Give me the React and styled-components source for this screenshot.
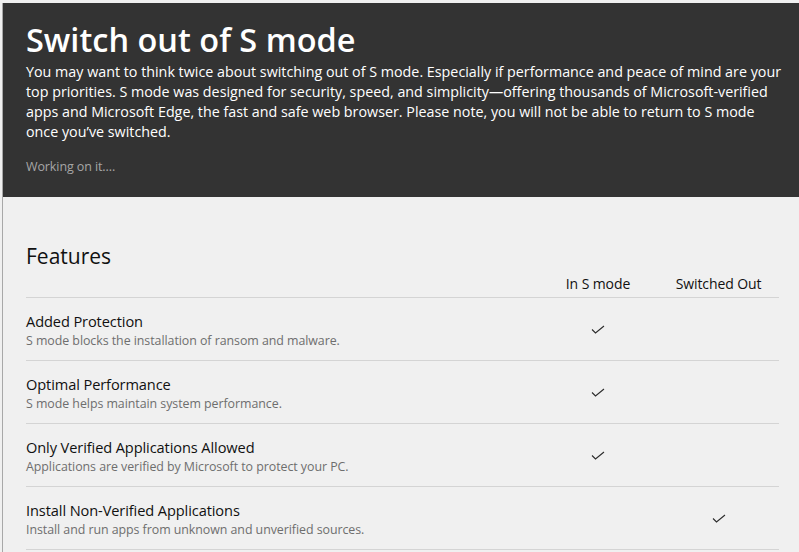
import React from "react";
import styled, { createGlobalStyle } from "styled-components";

const Global = createGlobalStyle`
  html, body { margin: 0; padding: 0; background: #f0f0f0; }
  body { font-family: "Open Sans", "Noto Sans", sans-serif; }
  * { box-sizing: border-box; }
`;

const Frame = styled.div`
  width: 799px;
  height: 552px;
  overflow: hidden;
  background: #f0f0f0;
  padding-top: 3px;
  padding-left: 2px;
`;

const Window = styled.div`
  height: 100%;
  border-left: 1px solid #a8a8a8;
  background: #f0f0f0;
  display: flex;
  flex-direction: column;
`;

const Hero = styled.header`
  background: #333333;
  color: #ffffff;
  height: 194px;
  padding: 15px 16px 0 23px;
  flex-shrink: 0;
`;

const Title = styled.h1`
  margin: 0;
  font-size: 32.5px;
  font-weight: 600;
  line-height: 44px;
  letter-spacing: 0;
`;

const Lead = styled.p`
  margin: 0;
  font-size: 14.3px;
  line-height: 20px;
  color: #ffffff;
`;

const Status = styled.div`
  margin-top: 16px;
  font-size: 12.5px;
  line-height: 18px;
  color: #a6a6a6;
  letter-spacing: -0.1px;
`;

const Body = styled.section`
  padding: 45px 20px 0 23px;
`;

const SectionTitle = styled.h2`
  margin: 0;
  font-size: 21px;
  font-weight: 400;
  line-height: 28px;
  color: #111;
`;

const Table = styled.div`
  display: flex;
  flex-direction: column;
`;

const Row = styled.div`
  display: grid;
  grid-template-columns: 1fr 120px 121px;
  align-items: center;
  min-height: ${(p) => (p.$head ? "28px" : "63px")};
  border-bottom: 1px solid #d4d4d4;
  ${(p) => (p.$head ? "align-items: end; padding-bottom: 4px;" : "")}
`;

const ColHead = styled.div`
  font-size: 14px;
  line-height: 18px;
  color: #111;
  text-align: center;
  letter-spacing: -0.1px;
`;

const Feature = styled.div`
  display: flex;
  flex-direction: column;
  gap: 1px;
  padding-top: 2px;
`;

const FeatureName = styled.div`
  font-size: 14.6px;
  line-height: 19px;
  color: #111;
  letter-spacing: -0.1px;
`;

const FeatureDesc = styled.div`
  font-size: 12.4px;
  line-height: 17px;
  color: #6e6e6e;
  letter-spacing: -0.05px;
`;

const Cell = styled.div`
  display: flex;
  justify-content: center;
  align-items: center;
  padding-top: 2px;
`;

const Check = () => (
  <svg width="14" height="10" viewBox="0 0 14 10" fill="none">
    <polyline points="1,4.5 4.5,8 13,1" stroke="#2b2b2b" strokeWidth="1.1" />
  </svg>
);

const features = [
  { name: "Added Protection", desc: "S mode blocks the installation of ransom and malware.", s: true, out: false },
  { name: "Optimal Performance", desc: "S mode helps maintain system performance.", s: true, out: false },
  { name: "Only Verified Applications Allowed", desc: "Applications are verified by Microsoft to protect your PC.", s: true, out: false },
  { name: "Install Non-Verified Applications", desc: "Install and run apps from unknown and unverified sources.", s: false, out: true },
];

export default function App() {
  return (
    <>
      <Global />
      <Frame>
        <Window>
          <Hero>
            <Title>Switch out of S mode</Title>
            <Lead>
              You may want to think twice about switching out of S mode. Especially if performance and peace of mind are your top priorities. S mode was designed for security, speed, and simplicity—offering thousands of Microsoft-verified apps and Microsoft Edge, the fast and safe web browser. Please note, you will not be able to return to S mode once you’ve switched.
            </Lead>
            <Status>Working on it....</Status>
          </Hero>
          <Body>
            <SectionTitle>Features</SectionTitle>
            <Table>
              <Row $head>
                <div />
                <ColHead>In S mode</ColHead>
                <ColHead>Switched Out</ColHead>
              </Row>
              {features.map((f) => (
                <Row key={f.name}>
                  <Feature>
                    <FeatureName>{f.name}</FeatureName>
                    <FeatureDesc>{f.desc}</FeatureDesc>
                  </Feature>
                  <Cell>{f.s && <Check />}</Cell>
                  <Cell>{f.out && <Check />}</Cell>
                </Row>
              ))}
            </Table>
          </Body>
        </Window>
      </Frame>
    </>
  );
}
